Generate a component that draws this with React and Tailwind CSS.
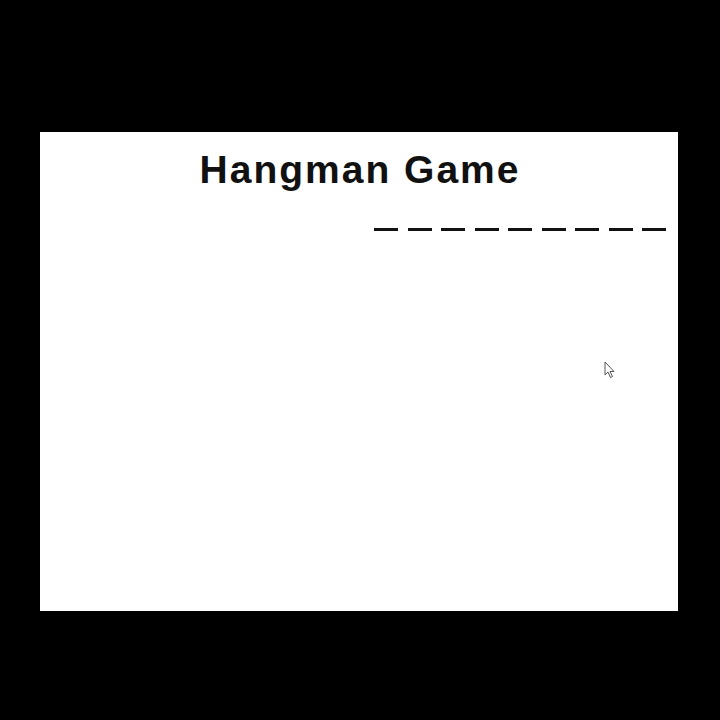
export default function App() {
  const letters = Array.from({ length: 9 });

  return (
    <div className="w-[720px] h-[720px] bg-black pt-[132px] pl-[40px] relative">
      <div
        className="w-[638px] h-[479px] bg-white flex flex-col pt-[18px]"
        style={{ fontFamily: '"Liberation Sans", Arial, sans-serif' }}
      >
        <h1 className="text-center text-[39px] leading-[39px] font-bold tracking-[2px] text-[#111] pl-[2px]">
          Hangman Game
        </h1>

        {/* blanks for the word */}
        <div className="flex justify-end gap-[9.5px] mt-[39px] pr-[12px]">
          {letters.map((_, i) => (
            <div key={i} className="w-[24px] h-[3px] bg-[#111]" />
          ))}
        </div>
      </div>

      {/* mouse pointer */}
      <svg
        className="absolute left-[604px] top-[361px]"
        width="12"
        height="18"
        viewBox="0 0 12 18"
      >
        <path
          d="M1 1 L1 14 L4 11 L6.5 16.5 L8.5 15.5 L6 10.5 L10 10.5 Z"
          fill="#fff"
          stroke="#555"
          strokeWidth="1"
          strokeLinejoin="round"
        />
      </svg>
    </div>
  );
}
